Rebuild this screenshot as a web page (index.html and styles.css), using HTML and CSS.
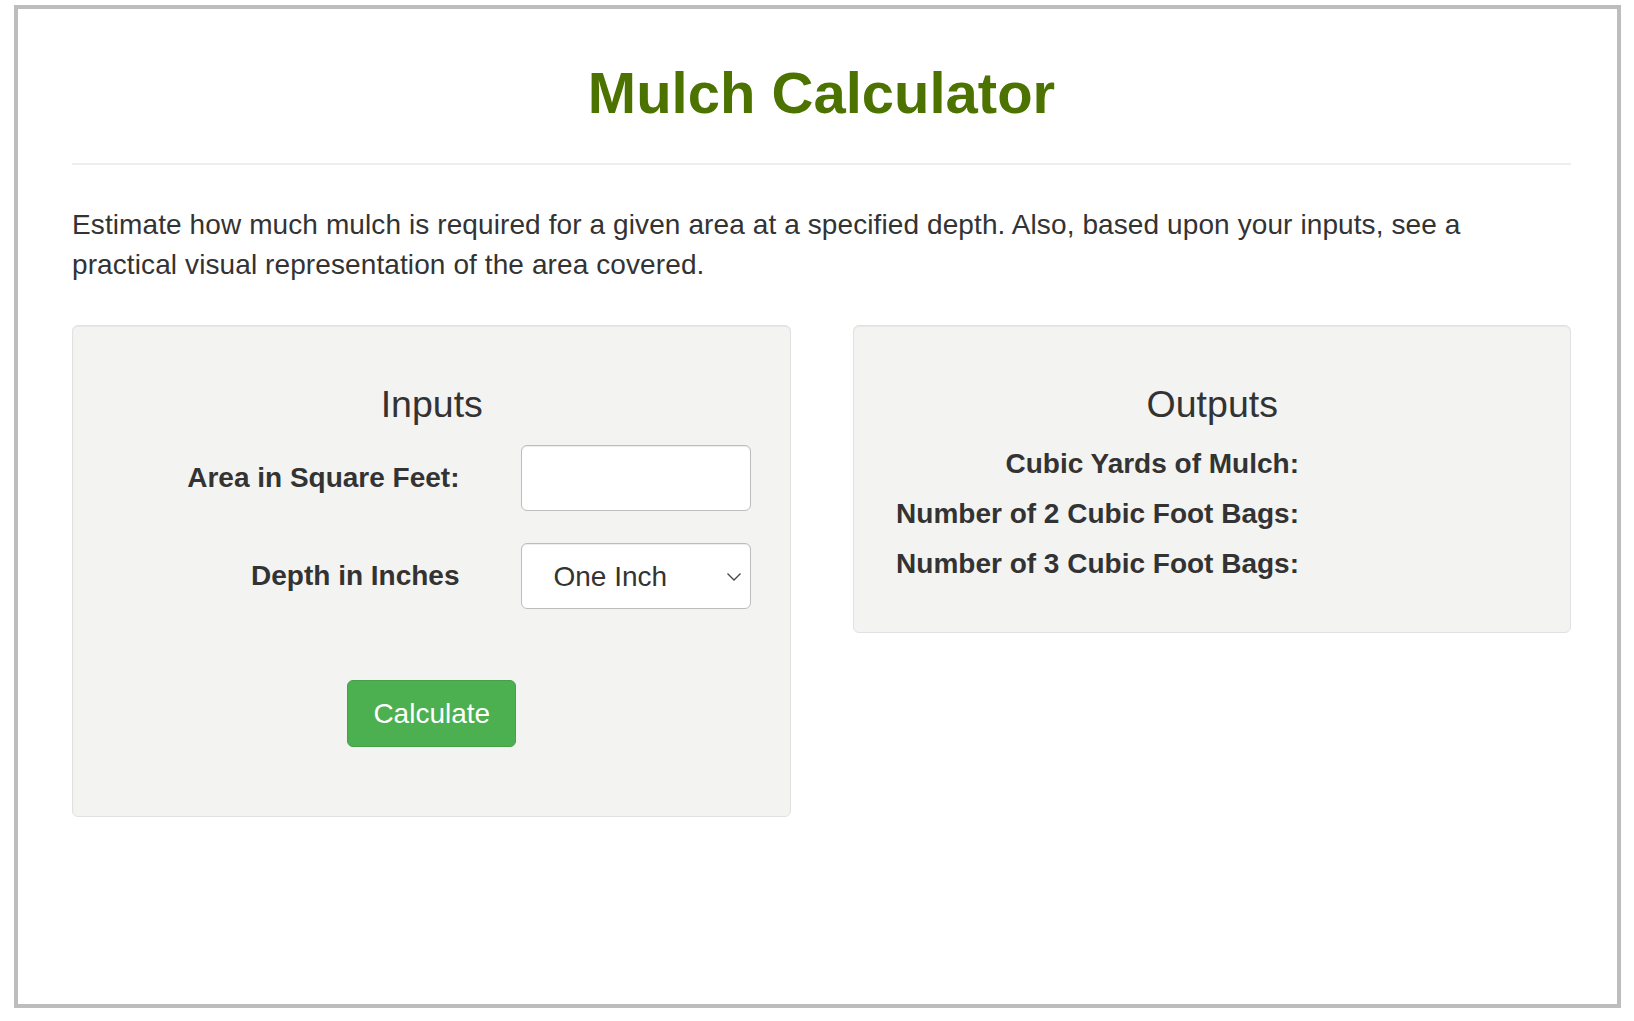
FILE: index.html
```html
<!DOCTYPE html>
<html lang="en">
<head>
  <meta charset="UTF-8">
  <title>Mulch Calculator</title>
  <link rel="stylesheet" href="styles.css">
</head>
<body>
  <div class="page">
    <h1>Mulch Calculator</h1>
    <hr>
    <p class="intro">Estimate how much mulch is required for a given area at a specified depth. Also, based upon your inputs, see a practical visual representation of the area covered.</p>
    <div class="panels">
      <div class="well">
        <h3>Inputs</h3>
        <form id="mulch-form" onsubmit="return false;">
          <div class="form-row">
            <label for="area">Area in Square Feet:</label>
            <input id="area" type="number" step="any">
          </div>
          <div class="form-row">
            <label for="depth">Depth in Inches</label>
            <div class="select-wrap">
              <select id="depth">
                <option value="1">One Inch</option>
                <option value="2">Two Inches</option>
                <option value="3">Three Inches</option>
                <option value="4">Four Inches</option>
              </select>
              <svg class="chevron" width="16" height="10" viewBox="0 0 16 10"><path d="M1.5 1.5 L8 8 L14.5 1.5" fill="none" stroke="#444" stroke-width="1.3"/></svg>
            </div>
          </div>
          <div class="buttons">
            <button type="button" onclick="calculate()">Calculate</button>
          </div>
        </form>
      </div>
      <div class="well well-out">
        <h3>Outputs</h3>
        <div class="out-row"><span class="out-label">Cubic Yards of Mulch:</span><span id="yards"></span></div>
        <div class="out-row"><span class="out-label">Number of 2 Cubic Foot Bags:</span><span id="bags2"></span></div>
        <div class="out-row"><span class="out-label">Number of 3 Cubic Foot Bags:</span><span id="bags3"></span></div>
      </div>
    </div>
  </div>
  <script>
  function calculate() {
    const area = parseFloat(document.getElementById('area').value) || 0;
    const depth = parseFloat(document.getElementById('depth').value) || 0;
    const cubicFeet = area * depth / 12;
    document.getElementById('yards').textContent = (cubicFeet / 27).toFixed(2);
    document.getElementById('bags2').textContent = Math.ceil(cubicFeet / 2);
    document.getElementById('bags3').textContent = Math.ceil(cubicFeet / 3);
  }
  </script>
</body>
</html>
```

FILE: styles.css
```css
html, body { margin: 0; padding: 0; background: #fff; }
body { font-family: "Liberation Sans", Arial, Helvetica, sans-serif; color: #333; }
.page { box-sizing: border-box; height: 1003px; margin: 5px 13px 0 14px; padding: 52px 46px 0 54px; border: 4px solid #bdbdbd; }
h1 { margin: 0; font-size: 58px; line-height: 64px; font-weight: 700; color: #4c7200; text-align: center; }
hr { margin: 38px 0 0; border: 0; border-top: 2px solid #eeeeee; }
.intro { margin: 40px 0 0; max-width: 1460px; font-size: 28px; line-height: 40px; letter-spacing: 0.1px; }
.panels { display: grid; grid-template-columns: 1fr 1fr; column-gap: 62px; align-items: start; margin-top: 40px; }
.well { background: #f3f3f2; border: 1px solid #e1e1e1; border-radius: 6px; box-shadow: inset 0 1px 1px rgba(0,0,0,0.05); padding: 58px 39px 69px 40px; }
.well-out { padding-bottom: 48px; }
.well h3 { margin: 0; font-size: 37.5px; line-height: 40px; font-weight: 400; text-align: center; }
.form-row { display: grid; grid-template-columns: 1fr 230px; column-gap: 61px; align-items: center; margin-top: 21px; }
.form-row + .form-row { margin-top: 32px; }
.form-row label { text-align: right; font-size: 28px; font-weight: 700; }
.form-row input, .form-row select { box-sizing: border-box; width: 230px; height: 66px; margin: 0; border: 1px solid #bdbdbd; border-radius: 6px; background: #fff; box-shadow: inset 0 1px 1px rgba(0,0,0,0.075); font-family: inherit; font-size: 28px; color: #333; }
.form-row input { padding: 0 16px; }
.form-row select { -webkit-appearance: none; appearance: none; padding: 0 40px 0 32px; }
.select-wrap { position: relative; }
.chevron { position: absolute; right: 9px; top: 29px; pointer-events: none; }
.buttons { display: flex; justify-content: center; margin-top: 71px; }
.buttons button { box-sizing: border-box; width: 169px; height: 67px; border: 1px solid #45a049; border-radius: 6px; background: #4caf50; color: #fff; font-family: inherit; font-size: 28px; cursor: pointer; }
.buttons button:hover { background: #449d48; }
.out-row { display: grid; grid-template-columns: 1fr 212px; column-gap: 20px; margin-top: 10px; font-size: 28px; line-height: 40px; }
.out-row:first-of-type { margin-top: 20px; }
.out-label { text-align: right; font-weight: 700; }
```
